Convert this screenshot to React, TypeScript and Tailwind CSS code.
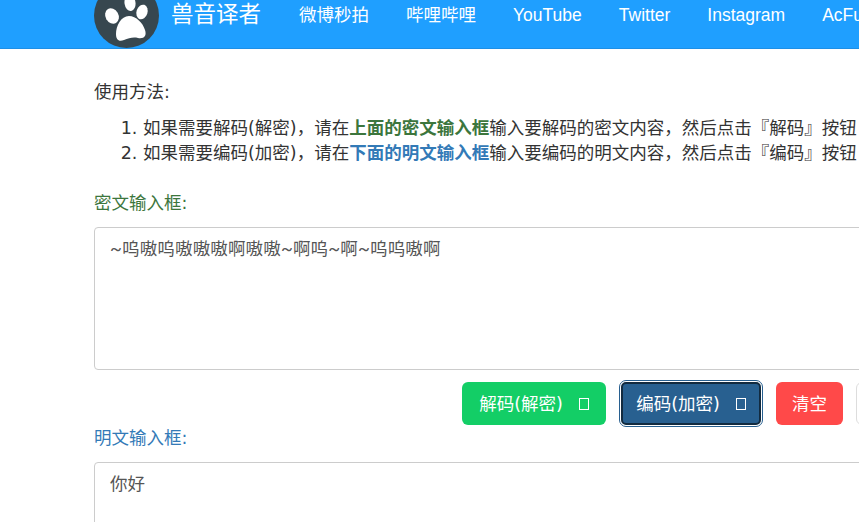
const navItems = ["微博秒拍", "哔哩哔哩", "YouTube", "Twitter", "Instagram", "AcFun"];

function Logo() {
  return (
    <svg width="65" height="65" viewBox="0 0 65 65" className="mt-[-17px] shrink-0">
      <circle cx="32.5" cy="32.5" r="32.5" fill="#37474f" />
      <ellipse cx="18" cy="33" rx="6.5" ry="8" transform="rotate(-30 18 33)" fill="#fff" />
      <ellipse cx="36" cy="20" rx="5.5" ry="8" transform="rotate(-8 36 20)" fill="#fff" />
      <ellipse cx="48" cy="29" rx="5.5" ry="7.5" transform="rotate(18 48 29)" fill="#fff" />
      <path d="M35 33c7 0 14 7 16 14 2 6-1 9-7 8-5-1-9 0-14 2-5 2-8 0-8-6 0-8 5-18 13-18z" fill="#fff" />
    </svg>
  );
}

function Tofu() {
  return <span className="ml-[16px] inline-block h-[12px] w-[10px] border-[1.5px] border-white" />;
}

export default function App() {
  return (
    <div className="h-[522px] w-[859px] overflow-hidden bg-white font-['Liberation_Sans','Noto_Sans_CJK_SC',sans-serif] text-[17.5px] leading-[25px] text-[#333]">
      <header className="flex h-[49px] items-start overflow-hidden border-b border-[#1e8fe6] bg-[#1f9fff] pl-[94px]">
        <Logo />
        <span className="ml-[12px] mt-[-1px] shrink-0 text-[22.5px] leading-[32px] text-white">兽音译者</span>
        <nav className="ml-[38px] flex shrink-0 gap-[37px] leading-[30px] text-white">
          {navItems.map((n) => (
            <span key={n} className="whitespace-nowrap">{n}</span>
          ))}
        </nav>
      </header>

      <main className="w-[1000px] pl-[94px] font-['DejaVu_Sans','Noto_Sans_CJK_SC',sans-serif]">
        <p className="mt-[31px]">使用方法:</p>
        <ol className="mt-[10px] list-decimal whitespace-nowrap pl-[49px]">
          <li className="h-[25px] pt-[1px]">如果需要解码(解密)，请在<b className="text-[#3c763d]">上面的密文输入框</b>输入要解码的密文内容，然后点击『解码』按钮</li>
          <li className="h-[25px] pt-[1px]">如果需要编码(加密)，请在<b className="text-[#337ab7]">下面的明文输入框</b>输入要编码的明文内容，然后点击『编码』按钮</li>
        </ol>

        <label className="mt-[25px] block h-[25px] pt-[1px] text-[#3c763d]">密文输入框:</label>
        <textarea
          readOnly
          className="mt-[12px] block h-[143px] w-[900px] resize-none rounded-[4px] border border-[#ccc] px-[15px] py-[9px] font-['Roboto','Noto_Sans_CJK_SC',sans-serif] tracking-[0.15px] text-[#555] outline-none"
          value="~呜嗷呜嗷嗷嗷啊嗷嗷~啊呜~啊~呜呜嗷啊"
        />

        <div className="mt-[12px] flex h-[43px] items-stretch gap-[13px] pl-[368px]">
          <button className="flex w-[144px] items-center justify-center rounded-[6px] bg-[#13ce66] pt-[1px] text-white">
            解码(解密)<Tofu />
          </button>
          <button className="mx-[2px] flex w-[140px] items-center justify-center rounded-[5px] border-2 border-[#122b40] bg-[#286090] pt-[1px] text-white outline outline-1 outline-offset-1 outline-[#286090]">
            编码(加密)<Tofu />
          </button>
          <button className="w-[67px] rounded-[6px] bg-[#ff4949] pt-[1px] text-white">清空</button>
          <button className="w-[100px] rounded-[6px] border border-[#ddd] bg-white" />
        </div>

        <label className="block h-[25px] pt-[1px] text-[#337ab7]">明文输入框:</label>
        <textarea
          readOnly
          className="mt-[12px] block h-[143px] w-[900px] resize-none rounded-[4px] border border-[#ccc] px-[15px] py-[9px] font-['Roboto','Noto_Sans_CJK_SC',sans-serif] text-[#555] outline-none"
          value="你好"
        />
      </main>
    </div>
  );
}
